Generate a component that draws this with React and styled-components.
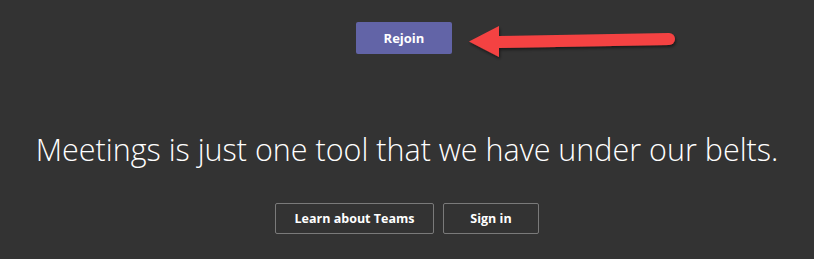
import React from "react";
import styled, { createGlobalStyle } from "styled-components";

const GlobalStyle = createGlobalStyle`
  html, body {
    margin: 0;
    padding: 0;
    background: #333333;
  }
  body {
    font-family: "Open Sans", "Noto Sans", sans-serif;
  }
`;

const Page = styled.div`
  position: relative;
  width: 814px;
  height: 259px;
  display: flex;
  flex-direction: column;
  align-items: center;
  padding-top: 22px;
  box-sizing: border-box;
  overflow: hidden;
`;

const RejoinButton = styled.button`
  width: 96px;
  height: 32px;
  margin-right: 6px;
  border: none;
  border-radius: 2px;
  background: #6264a7;
  color: #ffffff;
  font-family: "Open Sans", sans-serif;
  font-weight: 700;
  font-size: 13px;
  cursor: pointer;
`;

const Headline = styled.h1`
  margin: 73px 0 0;
  color: #ffffff;
  font-family: "Open Sans", sans-serif;
  font-weight: 300;
  font-size: 30.5px;
  line-height: 44px;
  white-space: nowrap;
`;

const ButtonRow = styled.div`
  display: flex;
  gap: 9px;
  margin-top: 32px;
`;

const OutlineButton = styled.button`
  width: ${({ w }) => w}px;
  height: 31px;
  border: 1px solid #7a7a7a;
  border-radius: 2px;
  background: transparent;
  color: #ffffff;
  font-family: "Open Sans", sans-serif;
  font-weight: 700;
  font-size: 12.5px;
  cursor: pointer;
`;

const Arrow = styled.svg`
  position: absolute;
  left: 460px;
  top: 18px;
  overflow: visible;
`;

export default function App() {
  return (
    <>
      <GlobalStyle />
      <Page>
        <RejoinButton>Rejoin</RejoinButton>
        <Headline>Meetings is just one tool that we have under our belts.</Headline>
        <ButtonRow>
          <OutlineButton w={159}>Learn about Teams</OutlineButton>
          <OutlineButton w={96}>Sign in</OutlineButton>
        </ButtonRow>
        <Arrow width="230" height="50" viewBox="0 0 230 50">
          <defs>
            <filter id="sh" x="-10%" y="-30%" width="120%" height="160%">
              <feDropShadow dx="1" dy="2" stdDeviation="1.5" floodColor="#000" floodOpacity="0.5" />
            </filter>
          </defs>
          <g filter="url(#sh)">
            <path d="M39 18 L209 15 L209 27 L39 30 Z" fill="#f44343" />
            <circle cx="209" cy="21" r="6" fill="#f44343" />
            <path d="M9 23.5 L39 8 L39 39 Z" fill="#f44343" />
          </g>
        </Arrow>
      </Page>
    </>
  );
}
